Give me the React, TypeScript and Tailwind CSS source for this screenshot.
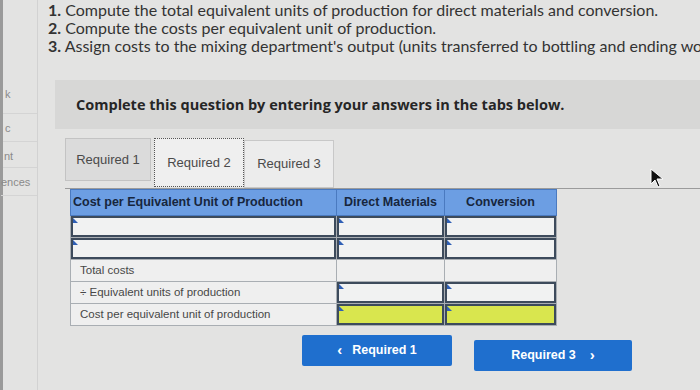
import React from 'react';

const sans = { fontFamily: '"Liberation Sans", Arial, sans-serif' };

function Corner() {
  return (
    <span className="absolute left-0 top-0 h-0 w-0 border-l-[5px] border-t-[5px] border-l-[#2f5fb5] border-t-transparent border-r-[5px] border-r-transparent" />
  );
}

function InputCell({ fill = 'bg-[#f1f2f2]' }: { fill?: string }) {
  return (
    <div className={`relative h-full border-2 border-[#3d4b5c] ${fill}`}>
      <Corner />
    </div>
  );
}

const rows = [
  { label: null, input: true },
  { label: null, input: true },
  { label: 'Total costs', input: false },
  { label: '÷ Equivalent units of production', input: true },
  { label: 'Cost per equivalent unit of production', input: true, yellow: true },
];

export default function App() {
  return (
    <div className="relative flex h-[390px] w-[700px] overflow-hidden bg-[#e3e3e2] text-[#2b2b2b]">
      {/* sidebar stub */}
      <div className="flex w-[38px] shrink-0 border-l-[3px] border-l-[#9a9a9a] border-r border-r-[#d2d2d2]">
        <div className="mt-[86px] flex w-full flex-col text-[11px] text-[#8a8a8a]" style={sans}>
          <div className="h-[28px] border-b border-[#d4d4d4] pl-[2px]">k</div>
          <div className="h-[28px] border-b border-[#d4d4d4] pl-[2px] pt-[6px]">c</div>
          <div className="h-[26px] border-b border-[#d4d4d4] pl-[1px] pt-[6px]">nt</div>
          <div className="-ml-[2px] h-[28px] border-b border-[#d4d4d4] pt-[6px]">ences</div>
        </div>
      </div>

      <div className="min-w-0 flex-1">
        {/* instructions */}
        <ol className="mt-[1px] pl-[10px] text-[16px] leading-[18px] text-[#333]" style={{ fontFamily: 'Lato, "Open Sans", sans-serif' }}>
          <li><b>1.</b> Compute the total equivalent units of production for direct materials and conversion.</li>
          <li><b>2.</b> Compute the costs per equivalent unit of production.</li>
          <li className="whitespace-nowrap"><b>3.</b> Assign costs to the mixing department's output (units transferred to bottling and ending work in process).</li>
        </ol>

        {/* gray panel */}
        <div className="ml-[17px] mt-[25px] flex h-[49px] items-center bg-[#d7d7d6] pl-[21px]">
          <span className="text-[14.5px] font-bold text-[#262626]" style={{ fontFamily: '"Open Sans", sans-serif' }}>
            Complete this question by entering your answers in the tabs below.
          </span>
        </div>

        {/* tabs */}
        <div className="ml-[27px] mt-[9px] flex h-[51px] items-start border-b border-[#9b9b9b] text-[13px] text-[#4a4a4a]" style={sans}>
          <div className="flex h-[43px] w-[86px] items-center justify-center border border-[#c3c3c3] bg-[#dbdbdb]">Required 1</div>
          <div className="ml-[3px] flex h-[49px] w-[90px] items-center justify-center border border-dotted border-[#555] bg-[#efefef]">Required 2</div>
          <div className="mt-[2px] flex h-[48px] w-[90px] items-center justify-center border border-[#c8c8c8] bg-[#ececec]">Required 3</div>
        </div>

        {/* table */}
        <div className="ml-[32px] w-[487px]" style={sans}>
          <div className="flex h-[27px] border border-[#4a7ac0] bg-[#6c9ee3] text-[12.5px] font-bold text-[#17263d]">
            <div className="flex w-[265px] items-center pl-[2px]">Cost per Equivalent Unit of Production</div>
            <div className="flex w-[108px] items-center justify-center border-l border-[#4a7ac0]">Direct Materials</div>
            <div className="flex flex-1 items-center justify-center border-l border-[#4a7ac0]">Conversion</div>
          </div>
          {rows.map((r, i) => (
            <div key={i} className="flex h-[22px] border-x border-b border-[#a9aeb3] bg-[#efefef]">
              <div className="w-[265px]">
                {r.label === null ? (
                  <InputCell />
                ) : (
                  <div className="flex h-full items-center pl-[9px] text-[11.5px] text-[#474747]">{r.label}</div>
                )}
              </div>
              <div className="w-[108px] border-l border-[#a9aeb3]">
                {r.input ? <InputCell fill={r.yellow ? 'bg-[#d9e64e]' : 'bg-[#f1f2f2]'} /> : null}
              </div>
              <div className="flex-1 border-l border-[#a9aeb3]">
                {r.input ? <InputCell fill={r.yellow ? 'bg-[#d9e64e]' : 'bg-[#f1f2f2]'} /> : null}
              </div>
            </div>
          ))}
        </div>

        {/* nav buttons */}
        <div className="ml-[264px] mt-[9px] flex gap-[22px]" style={sans}>
          <button className="flex h-[31px] w-[150px] items-center justify-center gap-[10px] rounded-[2px] bg-[#1f6fce] text-[12.5px] font-bold text-white">
            <span className="text-[15px]">&lsaquo;</span>
            Required 1
          </button>
          <button className="mt-[5px] flex h-[31px] w-[158px] items-center justify-center gap-[14px] rounded-[2px] bg-[#1f6fce] text-[12.5px] font-bold text-white">
            Required 3
            <span className="text-[15px]">&rsaquo;</span>
          </button>
        </div>
      </div>

      {/* mouse pointer */}
      <svg className="absolute left-[649px] top-[168px]" width="16" height="20" viewBox="0 0 16 20">
        <path d="M2 1 L2 16 L6 12 L9 19 L11 18 L8 11 L14 11 Z" fill="#111" stroke="#fff" strokeWidth="1" />
      </svg>
    </div>
  );
}
